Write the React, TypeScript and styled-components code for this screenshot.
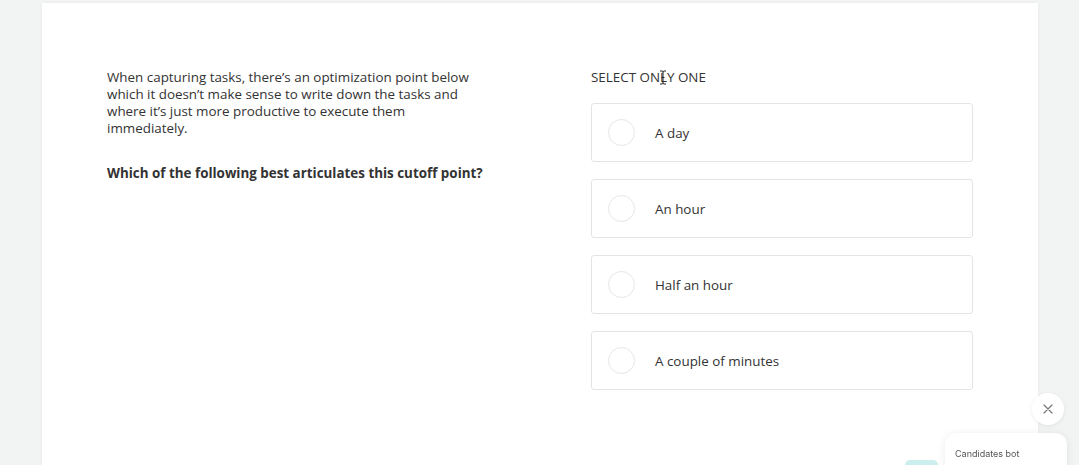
import React from "react";
import styled, { createGlobalStyle } from "styled-components";

const Global = createGlobalStyle`
  html, body { margin: 0; padding: 0; background: #f2f3f3; }
  body { font-family: "Open Sans", "Liberation Sans", sans-serif; color: #333; overflow: hidden; }
  * { box-sizing: border-box; }
`;

const Page = styled.div`
  padding: 3px 41px 0 42px;
  height: 465px;
  overflow: hidden;
`;

const Card = styled.div`
  background: #fff;
  height: 600px;
  padding: 66px 0 0 65px;
  box-shadow: 0 0 3px rgba(0, 0, 0, 0.05);
  display: grid;
  grid-template-columns: 484px 382px;
  align-items: start;
`;

const Prompt = styled.div`
  font-size: 13.4px;
  line-height: 17px;
  color: #333;
`;

const Paragraph = styled.p`
  margin: 0 0 28px;
  width: 368px;
`;

const Question = styled.p`
  margin: 0;
  font-weight: 700;
  white-space: nowrap;
`;

const Choices = styled.div`
  display: flex;
  flex-direction: column;
`;

const Label = styled.div`
  position: relative;
  font-size: 13.4px;
  line-height: 17px;
  color: #333;
  margin-bottom: 17px;
`;

const Cursor = styled.svg`
  position: absolute;
  left: 68px;
  top: 1px;
`;

const OptionList = styled.div`
  display: flex;
  flex-direction: column;
  gap: 17px;
`;

const Option = styled.label`
  display: flex;
  align-items: center;
  gap: 20px;
  height: 59px;
  padding-left: 16px;
  border: 1px solid #e4e4e4;
  border-radius: 3px;
  font-size: 13.4px;
  color: #333;
  cursor: pointer;
`;

const Radio = styled.span`
  width: 27px;
  height: 27px;
  border-radius: 50%;
  border: 1.5px solid #e6e6e6;
  flex: none;
`;

const CloseButton = styled.button`
  position: fixed;
  left: 1032px;
  top: 393px;
  width: 32px;
  height: 32px;
  border-radius: 50%;
  border: none;
  background: #fff;
  box-shadow: 0 1px 4px rgba(0, 0, 0, 0.08);
  display: flex;
  align-items: center;
  justify-content: center;
  padding: 0;
`;

const Bubble = styled.div`
  position: fixed;
  left: 945px;
  top: 433px;
  width: 122px;
  height: 60px;
  background: #fff;
  border-radius: 12px;
  box-shadow: 0 1px 8px rgba(0, 0, 0, 0.08);
  padding: 15px 0 0 10px;
  font-family: "Inter", "Liberation Sans", sans-serif;
  font-size: 9px;
  color: #555;
`;

const Tab = styled.div`
  position: fixed;
  left: 905px;
  top: 460px;
  width: 33px;
  height: 20px;
  border-radius: 5px;
  background: #cdeeee;
`;

export default function App() {
  return (
    <>
      <Global />
      <Page>
        <Card>
          <Prompt>
            <Paragraph>
              When capturing tasks, there’s an optimization point below which it doesn’t make sense to write down the tasks and where it’s just more productive to execute them immediately.
            </Paragraph>
            <Question>Which of the following best articulates this cutoff point?</Question>
          </Prompt>
          <Choices>
            <Label>
              SELECT ONLY ONE
              <Cursor width="8" height="15" viewBox="0 0 8 15">
                <path d="M1 1 H3 Q4 1 4 2.5 V12.5 Q4 14 3 14 H1 M7 1 H5 Q4 1 4 2.5 M4 12.5 Q4 14 5 14 H7 M2.5 7.5 H5.5" fill="none" stroke="#222" strokeWidth="1" />
              </Cursor>
            </Label>
            <OptionList>
              {["A day", "An hour", "Half an hour", "A couple of minutes"].map((t) => (
                <Option key={t}>
                  <Radio />
                  {t}
                </Option>
              ))}
            </OptionList>
          </Choices>
        </Card>
      </Page>
      <CloseButton aria-label="Close">
        <svg width="10" height="10" viewBox="0 0 10 10">
          <path d="M1 1 L9 9 M9 1 L1 9" stroke="#777" strokeWidth="1.2" strokeLinecap="round" />
        </svg>
      </CloseButton>
      <Tab />
      <Bubble>Candidates bot</Bubble>
    </>
  );
}
